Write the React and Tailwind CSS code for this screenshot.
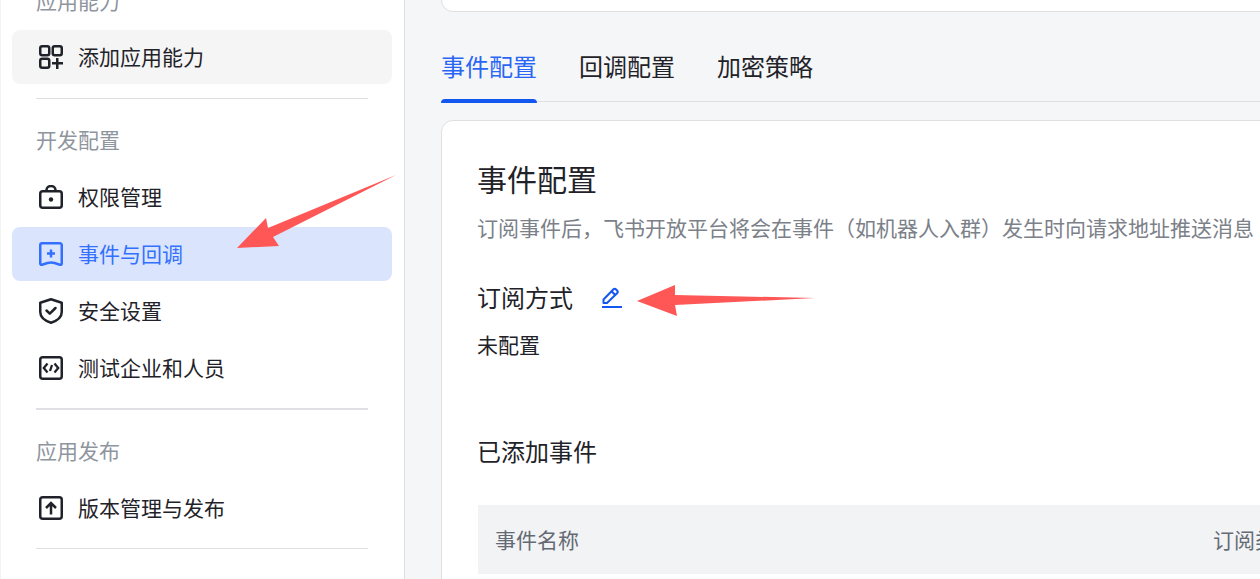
import React from "react";

const FONT = '"Noto Sans CJK SC", "Noto Sans", sans-serif';

const AppsIcon = () => (
  <svg width="24" height="24" viewBox="0 0 24 24" fill="none" stroke="currentColor" strokeWidth="2.5">
    <rect x="1.25" y="1.25" width="9" height="9" rx="2" />
    <rect x="13.75" y="1.25" width="9" height="9" rx="2" />
    <rect x="1.25" y="13.75" width="9" height="9" rx="2" />
    <path d="M18.25 13v11M13 18.25h11" />
  </svg>
);

const LockIcon = () => (
  <svg width="24" height="24" viewBox="0 0 24 24" fill="none" stroke="currentColor" strokeWidth="2.5">
    <rect x="1.25" y="6.25" width="21.5" height="16.5" rx="2.5" />
    <path d="M7.5 6V5a4.5 4 0 0 1 9 0v1" />
    <circle cx="12" cy="14.5" r="2.2" fill="currentColor" stroke="none" />
  </svg>
);

const BookIcon = () => (
  <svg width="24" height="24" viewBox="0 0 24 24" fill="none" stroke="currentColor" strokeWidth="2.5">
    <path d="M3 1.25h18A1.75 1.75 0 0 1 22.75 3v18.5c0 1-.8 1.500-1.750 1.200L15.500 21a12 12 0 0 0-7 0L3 22.700c-.95.3-1.750-.2-1.750-1.200V3A1.750 1.750 0 0 1 3 1.250z" />
    <path d="M12 7.500v8M8 11.500h8" />
  </svg>
);

const ShieldIcon = () => (
  <svg width="24" height="26" viewBox="0 0 24 26" fill="none" stroke="currentColor" strokeWidth="2.5" strokeLinejoin="round">
    <path d="M12 1.300 22.750 4.800v9.200c0 5-4.500 8.700-10.750 10.700C5.750 22.700 1.250 19 1.250 14V4.800z" />
    <path d="m7.500 12.500 3.300 3.200 5.700-5.700" strokeLinecap="round" />
  </svg>
);

const CodeIcon = () => (
  <svg width="24" height="24" viewBox="0 0 24 24" fill="none" stroke="currentColor" strokeWidth="2.5">
    <rect x="1.25" y="1.25" width="21.5" height="21.5" rx="2.5" />
    <path d="M8.500 7.500 4.800 12l3.700 4.500M15.500 7.500l3.700 4.500-3.700 4.500M13 9l-2 6" strokeWidth="2.300" />
  </svg>
);

const UploadIcon = () => (
  <svg width="24" height="24" viewBox="0 0 24 24" fill="none" stroke="currentColor" strokeWidth="2.5">
    <rect x="1.25" y="1.25" width="21.5" height="21.5" rx="2.5" />
    <path d="M12 18.500V7M7 12l5-5 5 5" />
  </svg>
);

const PencilIcon = () => (
  <svg width="20" height="21" viewBox="0 0 20 21" fill="none" stroke="currentColor" strokeWidth="2" strokeLinejoin="round">
    <path d="M1.500 12.500 11.500 2.200a1.600 1.600 0 0 1 2.300 0l1.500 1.500a1.600 1.600 0 0 1 0 2.300L5 16H1.500z" />
    <path d="m9.500 4.200 3.800 3.800" />
    <path d="M0 20h20" />
  </svg>
);

const NavItem = ({ icon, label, className = "" }) => (
  <div className={`flex items-center gap-[15px] h-[54px] ml-[11px] mr-3 pl-[27px] rounded-lg text-[21px] ${className}`}>
    <span className="flex w-6 shrink-0 justify-center">{icon}</span>
    <span className="pb-[2px] leading-7 whitespace-nowrap">{label}</span>
  </div>
);

const SectionLabel = ({ children, className = "" }) => (
  <div className={`h-7 ml-[35px] text-[21px] leading-7 text-[#8f959e] whitespace-nowrap ${className}`}>{children}</div>
);

const Divider = ({ className = "" }) => <div className={`ml-[35px] mr-9 bg-[#dee0e3] ${className}`} />;

export default function App() {
  return (
    <div className="relative flex h-[579px] w-[1260px] overflow-hidden bg-[#f5f6f7] text-[#1f2329]" style={{ fontFamily: FONT }}>
      {/* sidebar */}
      <aside className="w-[405px] shrink-0 bg-white border-l border-l-[#f2f3f5] border-r border-r-[#dee0e3]">
        <SectionLabel className="-mt-[14px]">应用能力</SectionLabel>
        <NavItem icon={<AppsIcon />} label="添加应用能力" className="mt-4 bg-[#f5f5f5]" />
        <Divider className="mt-[14px] h-px" />
        <SectionLabel className="mt-[26px]">开发配置</SectionLabel>
        <NavItem icon={<LockIcon />} label="权限管理" className="mt-[17px]" />
        <NavItem icon={<BookIcon />} label="事件与回调" className="mt-[3px] bg-[#dae5fd] text-[#3370ff]" />
        <NavItem icon={<ShieldIcon />} label="安全设置" className="mt-[3px]" />
        <NavItem icon={<CodeIcon />} label="测试企业和人员" className="mt-[3px]" />
        <Divider className="mt-[13px] h-[2px]" />
        <SectionLabel className="mt-[26px]">应用发布</SectionLabel>
        <NavItem icon={<UploadIcon />} label="版本管理与发布" className="mt-[17px]" />
        <Divider className="mt-[13px] h-px" />
      </aside>

      {/* main */}
      <main className="w-[900px] shrink-0 pl-9">
        <div className="h-[30px] -mt-[18px] bg-white rounded-xl border border-[#dee0e3]" />
        <div className="flex gap-[42px] h-[90px] border-b border-[#dee0e3] text-2xl">
          <div className="relative flex h-[90px] items-center pt-[18px] text-[#2a66f5]">
            事件配置
            <span className="absolute bottom-[-1px] left-0 right-0 h-1 rounded-t-[4px] bg-[#1456f0]" />
          </div>
          <div className="flex h-[90px] items-center pt-[18px]">回调配置</div>
          <div className="flex h-[90px] items-center pt-[18px]">加密策略</div>
        </div>
        <section className="mt-[18px] h-[600px] bg-white rounded-t-xl border border-[#dee0e3] pl-[35px]">
          <h1 className="mt-[37px] text-[30px] leading-10 font-normal">事件配置</h1>
          <p className="mt-[15px] text-[21px] leading-7 text-[#7b8089] whitespace-nowrap">
            订阅事件后，飞书开放平台将会在事件（如机器人入群）发生时向请求地址推送消息
          </p>
          <div className="mt-10 flex items-center gap-[29px] h-8">
            <span className="text-2xl leading-8">订阅方式</span>
            <span className="text-[#1456f0]"><PencilIcon /></span>
          </div>
          <div className="mt-[17px] text-[21px] leading-7">未配置</div>
          <div className="mt-[77px] text-2xl leading-8">已添加事件</div>
          <div className="mt-[38px] ml-px flex items-center h-[69px] pl-[17px] bg-[#f2f3f5] text-[21px] text-[#646a73] whitespace-nowrap">
            <span className="w-[718px] shrink-0">事件名称</span>
            <span>订阅类型</span>
          </div>
        </section>
      </main>

      {/* annotation arrows drawn over the page */}
      <svg className="absolute inset-0 pointer-events-none" width="1260" height="579" viewBox="0 0 1260 579" fill="#ff5656">
        <polygon points="396,175 268,228 266,218 237,248 279,246 273,237" />
        <polygon points="815,298 675,295 675,285 637,301 677,316 675,305" />
      </svg>
    </div>
  );
}
